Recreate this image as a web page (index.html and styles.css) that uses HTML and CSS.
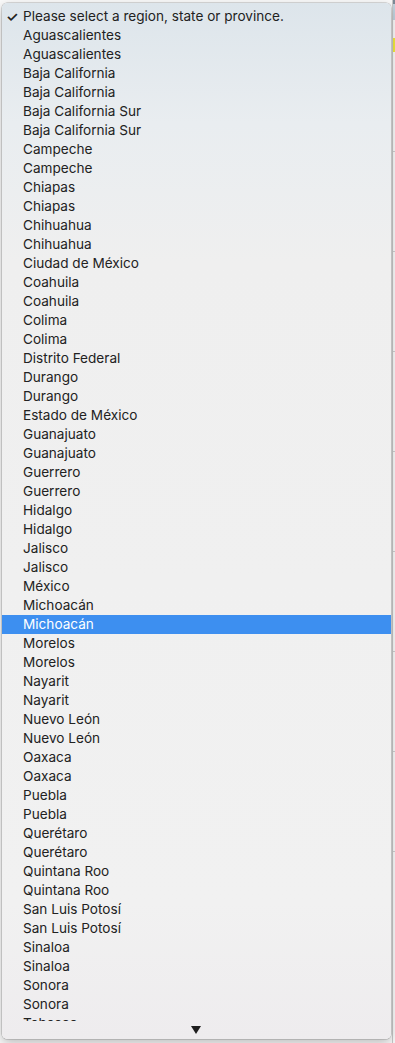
FILE: index.html
```html
<!DOCTYPE html>
<html lang="en">
<head>
	<meta charset="UTF-8">
	<title>Region</title>
	<link rel="stylesheet" href="styles.css">
</head>
<body>
	<div class="page">
		<div class="page-top"></div>
		<div class="page-bar"></div>
		<div class="page-row"></div>
		<div class="page-row"></div>
		<div class="page-row"></div>
		<div class="page-row"></div>
		<div class="page-row"></div>
		<div class="page-row"></div>
		<div class="page-row"></div>
		<div class="page-row"></div>
	</div>
	<div class="menu">
		<ul class="list">
			<li class="checked"><span class="check">✓</span>Please select a region, state or province.</li>
			<li>Aguascalientes</li>
			<li>Aguascalientes</li>
			<li>Baja California</li>
			<li>Baja California</li>
			<li>Baja California Sur</li>
			<li>Baja California Sur</li>
			<li>Campeche</li>
			<li>Campeche</li>
			<li>Chiapas</li>
			<li>Chiapas</li>
			<li>Chihuahua</li>
			<li>Chihuahua</li>
			<li>Ciudad de México</li>
			<li>Coahuila</li>
			<li>Coahuila</li>
			<li>Colima</li>
			<li>Colima</li>
			<li>Distrito Federal</li>
			<li>Durango</li>
			<li>Durango</li>
			<li>Estado de México</li>
			<li>Guanajuato</li>
			<li>Guanajuato</li>
			<li>Guerrero</li>
			<li>Guerrero</li>
			<li>Hidalgo</li>
			<li>Hidalgo</li>
			<li>Jalisco</li>
			<li>Jalisco</li>
			<li>México</li>
			<li>Michoacán</li>
			<li class="active">Michoacán</li>
			<li>Morelos</li>
			<li>Morelos</li>
			<li>Nayarit</li>
			<li>Nayarit</li>
			<li>Nuevo León</li>
			<li>Nuevo León</li>
			<li>Oaxaca</li>
			<li>Oaxaca</li>
			<li>Puebla</li>
			<li>Puebla</li>
			<li>Querétaro</li>
			<li>Querétaro</li>
			<li>Quintana Roo</li>
			<li>Quintana Roo</li>
			<li>San Luis Potosí</li>
			<li>San Luis Potosí</li>
			<li>Sinaloa</li>
			<li>Sinaloa</li>
			<li>Sonora</li>
			<li>Sonora</li>
			<li>Tabasco</li>
		</ul>
		<div class="scroll-down"><span class="arrow"></span></div>
	</div>
</body>
</html>
```

FILE: styles.css
```css
*{
	margin: 0;
	padding: 0;
	box-sizing: border-box;
}
ul,li{
	list-style: none;
}
body{
	width: 395px;
	height: 1043px;
	overflow: hidden;
	background: #fafafa;
	font-family: Inter, "Noto Sans", "Liberation Sans", sans-serif;
	position: relative;
}
.page{
	border-left: 1px solid #c8c8c8;
	margin-left: 392px;
	height: 1043px;
}
.page-top{
	height: 20px;
	background: #c3d3df;
	border-top: 4px solid #7c8a96;
}
.page-bar{
	height: 14px;
	margin-top: 18px;
	background: #f1ea3c;
}
.page-row{
	height: 100px;
	border-bottom: 1px solid #d0d0d0;
}
.menu{
	position: absolute;
	left: 2px;
	top: 3px;
	width: 389px;
	height: 1036px;
	border-radius: 5px;
	overflow: hidden;
	background: linear-gradient(#dde5eb, #e9edf0 120px, #efefef 260px, #f1f1f1 900px, #eeecee);
	box-shadow: 0 0 0 0.5px rgba(0,0,0,0.25), 0 4px 12px rgba(0,0,0,0.25);
	display: flex;
	flex-direction: column;
}
.list{
	padding-top: 4px;
	height: 1018px;
	overflow: hidden;
	flex: none;
}
.list li{
	height: 19px;
	line-height: 19px;
	padding-left: 21px;
	font-size: 13.6px;
	color: #222;
	white-space: nowrap;
	position: relative;
}
.check{
	position: absolute;
	left: 4px;
	top: 0;
	font-size: 14px;
	font-weight: 600;
}
.list .active{
	background: #3d8ff0;
	color: #fff;
}
.scroll-down{
	flex: 1;
	display: flex;
	justify-content: center;
	align-items: center;
}
.arrow{
	width: 0;
	height: 0;
	border-left: 5px solid transparent;
	border-right: 5px solid transparent;
	border-top: 8px solid #1e1e1e;
	margin-left: -1px;
}
```
